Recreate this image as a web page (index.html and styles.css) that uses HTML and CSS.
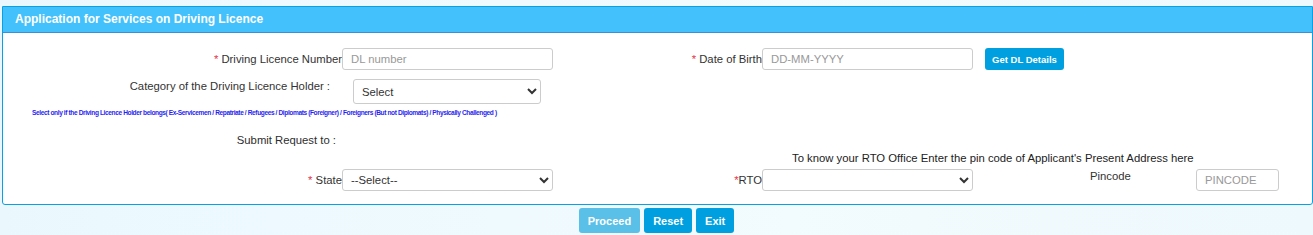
FILE: index.html
```html
<!DOCTYPE html>
<html lang="en">
<head>
    <meta charset="UTF-8">
    <meta name="viewport" content="width=device-width, initial-scale=1.0">
    <title>Application for Services on Driving Licence</title>
    <link rel="stylesheet" href="styles.css">
</head>
<body>
    <section class="panel">
        <div class="panel-head">Application for Services on Driving Licence</div>

        <div class="panel-body">
            <div class="row row-dl">
                <label class="lbl"><span class="req">*</span> Driving Licence Number</label>
                <input type="text" class="field" placeholder="DL number">
                <label class="lbl lbl-mid"><span class="req">*</span> Date of Birth</label>
                <input type="text" class="field" placeholder="DD-MM-YYYY">
                <button type="button" class="btn btn-small">Get DL Details</button>
            </div>

            <div class="row row-cat">
                <label class="lbl lbl-cat">Category of the Driving Licence Holder :</label>
                <select class="field select-cat">
                    <option>Select</option>
                </select>
            </div>

            <p class="note">Select only if the Driving Licence Holder belongs( Ex-Servicemen / Repatriate / Refugees / Diplomats (Foreigner) / Foreigners (But not Diplomats) / Physically Challenged )</p>

            <div class="row row-submit">
                <span class="lbl lbl-submit">Submit Request to :</span>
            </div>

            <p class="hint">To know your RTO Office Enter the pin code of Applicant's Present Address here</p>

            <div class="row row-rto">
                <label class="lbl"><span class="req">*</span> State</label>
                <select class="field">
                    <option>--Select--</option>
                </select>
                <label class="lbl lbl-mid"><span class="req">*</span>RTO</label>
                <select class="field">
                    <option></option>
                </select>
                <span class="lbl-pin">Pincode</span>
                <input type="text" class="field field-pin" placeholder="PINCODE">
            </div>
        </div>
    </section>

    <nav class="actions">
        <button type="button" class="btn btn-off">Proceed</button>
        <button type="button" class="btn">Reset</button>
        <button type="button" class="btn">Exit</button>
    </nav>
</body>
</html>
```

FILE: styles.css
```css
body {
    font-family: "Liberation Sans", Arial, sans-serif;
    background: linear-gradient(90deg, #eaf8fe 0%, #f2fbfe 60%, #eef9fd 100%);
    color: #333333;
    margin: 0;
    padding: 0;
    font-size: 11.3px;
}
.panel {
    margin: 6px 0 0 2px;
    border: 1px solid #0aa0e4;
    border-radius: 0 0 3px 3px;
    background-color: #ffffff;
}
.panel-head {
    background-color: #42c1fc;
    color: #ffffff;
    font-weight: bold;
    font-size: 12px;
    height: 25px;
    line-height: 25px;
    padding-left: 12px;
    border-bottom: 1px solid #3b8fd4;
}
.panel-body {
    padding: 15px 0 13px 0;
}
.row {
    display: flex;
    align-items: center;
}
.lbl {
    width: 339px;
    text-align: right;
    white-space: nowrap;
}
.lbl-mid {
    width: 209px;
}
.req {
    color: #e8334a;
}
.field {
    box-sizing: border-box;
    width: 211px;
    height: 22px;
    border: 1px solid #cccccc;
    border-radius: 3px;
    background-color: #ffffff;
    font-family: inherit;
    font-size: 11.3px;
    color: #333333;
    padding: 0 8px;
    margin: 0;
}
.field::placeholder {
    color: #999999;
}
select.field {
    padding: 0 4px;
}
.btn {
    font-family: inherit;
    font-weight: bold;
    font-size: 11px;
    color: #ffffff;
    background-color: #00a0e0;
    border: none;
    border-radius: 3px;
    height: 25px;
    padding: 0 9px;
    cursor: pointer;
}
.btn-small {
    font-size: 9.5px;
    height: 22px;
    width: 79px;
    padding: 0;
    margin-left: 12px;
}
.row-cat {
    margin-top: 9px;
    align-items: flex-start;
}
.lbl-cat {
    padding-right: 12px;
    box-sizing: border-box;
    padding-top: 1px;
}
.select-cat {
    width: 188px;
    height: 25px;
    margin-left: 11px;
    padding: 0 7px;
}
.note {
    margin: 5px 0 0 29px;
    font-size: 6.6px;
    letter-spacing: -0.4px;
    font-weight: bold;
    color: #2a1ff0;
    white-space: nowrap;
}
.row-submit {
    margin-top: 18px;
}
.lbl-submit {
    box-sizing: border-box;
    padding-right: 6px;
    color: #2e2e2e;
}
.hint {
    margin: 6px 0 0 789px;
    color: #222222;
}
.row-rto {
    margin-top: 5px;
}
.lbl-pin {
    margin-left: 117px;
    width: 106px;
    align-self: flex-start;
    padding-top: 1px;
}
.field-pin {
    width: 83px;
}
.actions {
    display: flex;
    justify-content: center;
    gap: 4px;
    margin-top: 3px;
}
.btn-off {
    background-color: #5bc0e8;
}
```
